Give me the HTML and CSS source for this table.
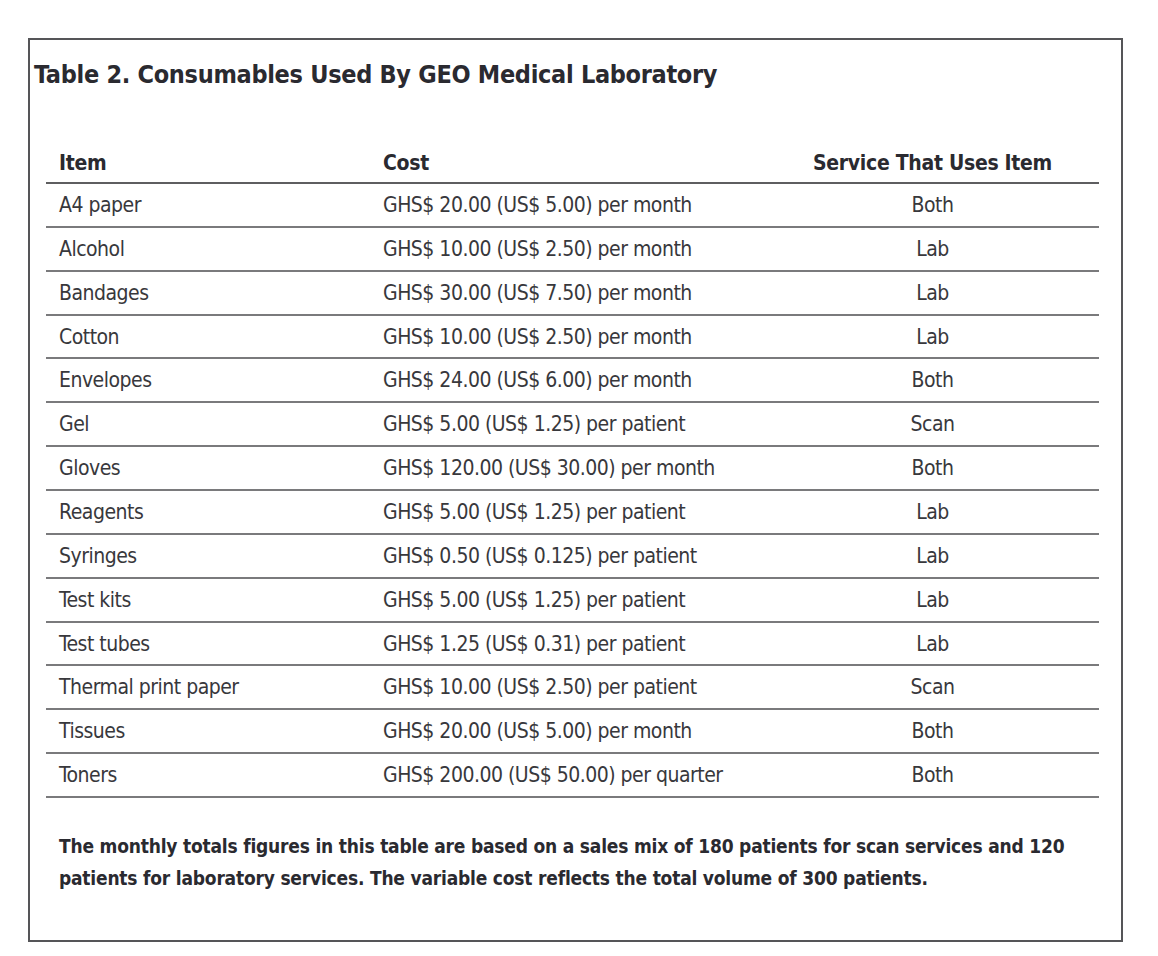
FILE: index.html
```html
<!DOCTYPE html>
<html lang="en">
<head>
<meta charset="utf-8">
<title>Table 2. Consumables Used By GEO Medical Laboratory</title>
<link rel="stylesheet" href="styles.css">
</head>
<body>
<div class="card">
  <h1 class="title">Table 2. Consumables Used By GEO Medical Laboratory</h1>
  <table class="data">
    <colgroup>
      <col class="c-item">
      <col class="c-cost">
      <col class="c-svc">
    </colgroup>
    <thead>
      <tr><th class="l">Item</th><th class="l">Cost</th><th class="c">Service That Uses Item</th></tr>
    </thead>
    <tbody>
      <tr><td>A4 paper</td><td>GHS$ 20.00 (US$ 5.00) per month</td><td class="c">Both</td></tr>
      <tr><td>Alcohol</td><td>GHS$ 10.00 (US$ 2.50) per month</td><td class="c">Lab</td></tr>
      <tr><td>Bandages</td><td>GHS$ 30.00 (US$ 7.50) per month</td><td class="c">Lab</td></tr>
      <tr><td>Cotton</td><td>GHS$ 10.00 (US$ 2.50) per month</td><td class="c">Lab</td></tr>
      <tr><td>Envelopes</td><td>GHS$ 24.00 (US$ 6.00) per month</td><td class="c">Both</td></tr>
      <tr><td>Gel</td><td>GHS$ 5.00 (US$ 1.25) per patient</td><td class="c">Scan</td></tr>
      <tr><td>Gloves</td><td>GHS$ 120.00 (US$ 30.00) per month</td><td class="c">Both</td></tr>
      <tr><td>Reagents</td><td>GHS$ 5.00 (US$ 1.25) per patient</td><td class="c">Lab</td></tr>
      <tr><td>Syringes</td><td>GHS$ 0.50 (US$ 0.125) per patient</td><td class="c">Lab</td></tr>
      <tr><td>Test kits</td><td>GHS$ 5.00 (US$ 1.25) per patient</td><td class="c">Lab</td></tr>
      <tr><td>Test tubes</td><td>GHS$ 1.25 (US$ 0.31) per patient</td><td class="c">Lab</td></tr>
      <tr><td>Thermal print paper</td><td>GHS$ 10.00 (US$ 2.50) per patient</td><td class="c">Scan</td></tr>
      <tr><td>Tissues</td><td>GHS$ 20.00 (US$ 5.00) per month</td><td class="c">Both</td></tr>
      <tr><td>Toners</td><td>GHS$ 200.00 (US$ 50.00) per quarter</td><td class="c">Both</td></tr>
    </tbody>
  </table>
  <p class="note">The monthly totals figures in this table are based on a sales mix of 180 patients for scan services and 120 patients for laboratory services. The variable cost reflects the total volume of 300 patients.</p>
</div>
</body>
</html>
```

FILE: styles.css
```css
html, body {
  margin: 0;
  padding: 0;
  background: #ffffff;
}

body {
  font-family: "Liberation Sans Narrow", "DejaVu Sans Condensed", "Liberation Sans", sans-serif;
  color: #2b2b2f;
}

.card {
  box-sizing: border-box;
  width: 1095px;
  height: 904px;
  margin: 38px 0 0 28px;
  border: 2px solid #555558;
  padding: 0 22px 0 16px;
}

.title {
  margin: 20px 0 0 -12px;
  font-size: 25px;
  line-height: 30px;
  font-weight: 700;
  color: #2a2a30;
  letter-spacing: -0.3px;
}

.data {
  width: 1053px;
  margin-top: 40px;
  border-collapse: collapse;
  table-layout: fixed;
}

.c-item { width: 324px; }
.c-cost { width: 396px; }
.c-svc { width: 333px; }

.data th {
  font-size: 21px;
  font-weight: 700;
  color: #2a2a30;
  letter-spacing: -0.3px;
  height: 45px;
  padding: 0 13px 7px;
  vertical-align: bottom;
  border-bottom: 2px solid #5e5e60;
  line-height: 24px;
}

.data td {
  font-size: 21px;
  font-weight: 400;
  color: #38383c;
  letter-spacing: -0.5px;
  height: 41.86px;
  padding: 0 13px;
  border-bottom: 2px solid #7a7a7c;
  line-height: 24px;
  white-space: nowrap;
}

.l { text-align: left; }
.c { text-align: center; }

.note {
  width: 1025px;
  margin: 32px 0 0 13px;
  font-size: 19px;
  line-height: 32px;
  font-weight: 700;
  letter-spacing: -0.2px;
  color: #2a2a30;
}
```
